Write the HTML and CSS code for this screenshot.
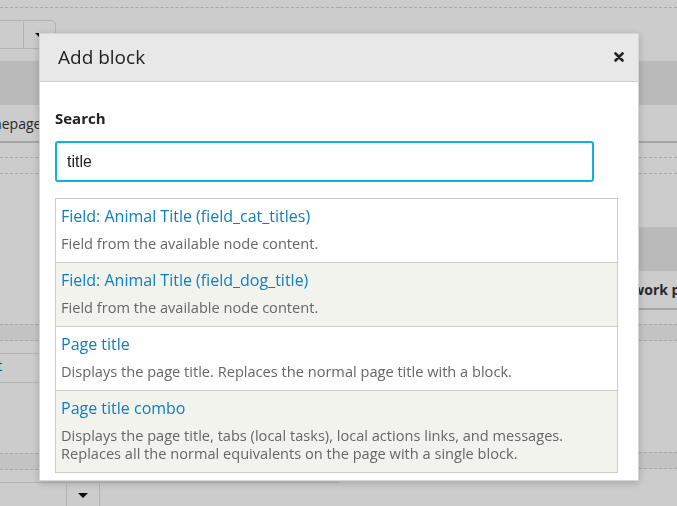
FILE: index.html
```html
<!DOCTYPE html>
<html lang="en">
  <head>
    <meta charset="UTF-8" />
    <meta name="viewport" content="width=device-width, initial-scale=1" />
    <title>Add block</title>
    <link rel="stylesheet" href="styles.css">
  </head>
  <body>
    <div class="page">
      <div class="col">
        <div class="region-top">
          <div class="btn-group">
            <span class="btn-main"></span>
            <span class="btn-toggle"><span class="caret"></span></span>
          </div>
        </div>
        <div class="band"></div>
        <div class="block-row"><span class="shift-left">Homepage</span></div>
        <div class="rule-thick"></div>
        <div class="dash-pair first"></div>
        <div class="dash-pair tinted lower"></div>
        <div class="link-row"><a class="shift-left" href="#">Contact</a></div>
        <div class="dash-pair bottom"></div>
        <div class="foot-rule"></div>
        <div class="foot-btn"><span class="caret"></span></div>
      </div>
      <div class="col">
        <div class="region-top"></div>
        <div class="band"></div>
        <div class="block-row"></div>
        <div class="rule-thick"></div>
        <div class="dash-pair first"></div>
        <div class="band mid"></div>
        <div class="block-row title-row"><strong>Network page</strong></div>
        <div class="rule-thick"></div>
        <div class="dash-pair tinted"></div>
        <div class="dash-pair bottom far"></div>
      </div>
    </div>

    <div class="overlay"></div>

    <div class="dialog" role="dialog">
      <div class="dialog-header">
        <h2 class="dialog-title">Add block</h2>
        <button class="dialog-close" type="button" aria-label="Close">
          <svg width="10" height="10" viewBox="0 0 10 10">
            <path d="M1.5 1.5 L8.5 8.5 M8.5 1.5 L1.5 8.5" stroke="#222" stroke-width="2.6" stroke-linecap="round"/>
          </svg>
        </button>
      </div>
      <div class="dialog-body">
        <label class="search-label" for="block-search">Search</label>
        <input class="search-input" id="block-search" type="search" value="title">

        <ul class="block-list">
          <li class="block-item">
            <a href="#">Field: Animal Title (field_cat_titles)</a>
            <p>Field from the available node content.</p>
          </li>
          <li class="block-item">
            <a href="#">Field: Animal Title (field_dog_title)</a>
            <p>Field from the available node content.</p>
          </li>
          <li class="block-item">
            <a href="#">Page title</a>
            <p>Displays the page title. Replaces the normal page title with a block.</p>
          </li>
          <li class="block-item">
            <a href="#">Page title combo</a>
            <p>Displays the page title, tabs (local tasks), local actions links, and messages. Replaces all the normal equivalents on the page with a single block.</p>
          </li>
        </ul>
      </div>
    </div>
  </body>
</html>
```

FILE: styles.css
```css
* {
  box-sizing: border-box;
}

html {
  font-size: 100%;
}

body {
  margin: 0;
  height: 506px;
  overflow: hidden;
  background: #fff;
  color: #222;
  font-family: 'Open Sans', 'DejaVu Sans', sans-serif;
  font-size: 14px;
}

/* page behind the dialog */

.page {
  display: grid;
  grid-template-columns: 1fr 1fr;
  height: 506px;
  overflow: hidden;
}

.col {
  display: flex;
  flex-direction: column;
  overflow: hidden;
}

.region-top {
  flex: none;
  height: 54px;
  margin-top: 7px;
  border-top: 1px dashed #d4d4d4;
}

.btn-group {
  display: flex;
  width: 56px;
  height: 29px;
  margin-top: 12px;
  border: 1px solid #e0e0e0;
  border-left: 0;
  border-radius: 0 5px 0 0;
}

.btn-main {
  width: 24px;
  border-right: 1px solid #e0e0e0;
}

.btn-toggle {
  flex: 1;
  display: flex;
  align-items: center;
  justify-content: center;
  padding-top: 1px;
}

.caret {
  width: 0;
  height: 0;
  border-left: 5px solid transparent;
  border-right: 5px solid transparent;
  border-top: 5px solid #111;
}

.band {
  height: 44px;
  background: #e9e9e9;
  flex: none;
}

.band.mid {
  margin-top: 53px;
}

.block-row {
  height: 36px;
  display: flex;
  align-items: center;
  flex: none;
  color: #333;
}

.title-row {
  height: 37px;
  padding-left: 268px;
  white-space: nowrap;
}

.shift-left {
  margin-left: -30px;
  white-space: nowrap;
}

.rule-thick {
  height: 2px;
  background: #cfcfcf;
  flex: none;
}

.dash-pair {
  height: 17px;
  border-top: 1px dashed #d4d4d4;
  border-bottom: 1px dashed #d4d4d4;
  flex: none;
}

.dash-pair.first {
  margin-top: 14px;
}

.dash-pair.tinted {
  margin-top: 14px;
  background: #f6f6f6;
}

.dash-pair.lower {
  margin-top: 150px;
}

.dash-pair.bottom {
  margin-top: 70px;
  background: #f6f6f6;
}

.dash-pair.far {
  margin-top: 111px;
}

.link-row {
  height: 30px;
  margin-top: 12px;
  padding-bottom: 6px;
  border-top: 1px solid #e2e2e2;
  border-bottom: 1px solid #e2e2e2;
  display: flex;
  align-items: center;
  flex: none;
}

.link-row a {
  color: #0074bd;
  text-decoration: none;
  margin-left: -48px;
}

.foot-rule {
  height: 1px;
  margin-top: 12px;
  background: #e2e2e2;
  flex: none;
}

.foot-btn {
  width: 34px;
  height: 30px;
  margin: 1px 0 0 66px;
  border-left: 1px solid #e0e0e0;
  border-right: 1px solid #e0e0e0;
  display: flex;
  justify-content: center;
  padding-top: 9px;
  flex: none;
}

.overlay {
  position: fixed;
  inset: 0;
  background: rgba(0, 0, 0, 0.2);
}

/* dialog */

.dialog {
  position: fixed;
  left: 39px;
  top: 33px;
  width: 600px;
  height: 448px;
  background: #fff;
  border: 1px solid #d6d6d6;
  box-shadow: 0 2px 8px rgba(0, 0, 0, 0.2);
}

.dialog-header {
  height: 48px;
  display: flex;
  align-items: center;
  justify-content: space-between;
  padding: 0 8px 2px 18px;
  background: #e8e8e8;
  border-bottom: 1px solid #cfcfcf;
}

.dialog-title {
  margin: 0;
  font-size: 19px;
  font-weight: 400;
  color: #222;
}

.dialog-close {
  width: 22px;
  height: 22px;
  padding: 0;
  border: 0;
  background: none;
  display: flex;
  align-items: center;
  justify-content: center;
}

.dialog-body {
  padding: 26px 20px 0 15px;
}

.search-label {
  display: block;
  font-size: 15px;
  font-weight: 700;
  line-height: 20px;
  color: #222;
}

.search-input {
  display: block;
  width: 539px;
  height: 41px;
  margin-top: 13px;
  padding: 0 10px;
  border: 2px solid #0cb2e0;
  border-radius: 3px;
  font-family: 'Liberation Sans', Arial, sans-serif;
  font-size: 16px;
  color: #222;
  outline: none;
  -webkit-appearance: none;
}

.block-list {
  list-style: none;
  margin: 16px 0 0;
  padding: 0;
  width: 563px;
  border: 1px solid #cccccc;
}

.block-item {
  padding: 5px 5px 10px;
  border-top: 1px solid #cccccc;
}

.block-item:first-child {
  border-top: 0;
}

.block-item:nth-child(even) {
  background: #f3f3ee;
}

.block-item a {
  display: block;
  font-size: 16px;
  line-height: 24px;
  color: #0b7fc3;
  text-decoration: none;
}

.block-item p {
  margin: 6px 0 0;
  font-size: 14.6px;
  line-height: 18px;
  color: #666;
}
```
